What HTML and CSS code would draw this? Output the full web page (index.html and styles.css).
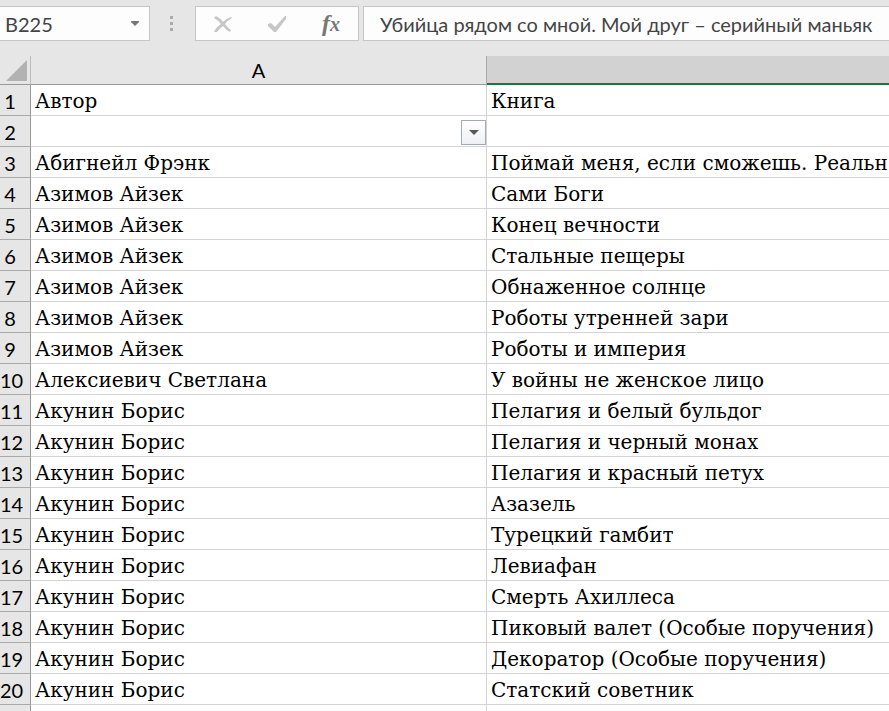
FILE: index.html
```html
<!DOCTYPE html>
<html lang="ru">
<head>
    <meta charset="UTF-8">
    <meta name="viewport" content="width=device-width, initial-scale=1.0">
    <title>Книги</title>
    <link rel="stylesheet" href="styles.css">
</head>
<body>
    <div class="formula-bar">
        <div class="name-box">
            <input type="text" class="name-input" aria-label="Имя ячейки" value="B225">
            <button type="button" class="name-toggle" aria-label="Список имён">
                <svg width="8" height="5" viewBox="0 0 8 5"><path d="M0 0h8v1L4 5 0 1z" fill="#777"/></svg>
            </button>
        </div>
        <div class="grip"><span></span><span></span><span></span></div>
        <div class="actions">
            <button type="button" aria-label="Отмена">
                <svg width="20" height="18" viewBox="0 0 20 18"><path d="M1 3l2-2q4 2 7 6 4-4 8-5l1 1q-4 2-7 6 3 4 6 6l-1 2q-4-2-7-6-4 3-6 6H1q2-5 7-8-3-4-7-6z" fill="#c6c6c6"/></svg>
            </button>
            <button type="button" aria-label="Ввод">
                <svg width="20" height="18" viewBox="0 0 20 18"><path d="M1 9l3-1 4 4L18 1h1v3L9 17H7L1 11z" fill="#c6c6c6"/></svg>
            </button>
            <button type="button" class="fx" aria-label="Вставить функцию"><span class="fx-f">f</span><span class="fx-x">x</span></button>
        </div>
        <input type="text" class="formula-input" aria-label="Строка формул" value="Убийца рядом со мной. Мой друг – серийный маньяк">
    </div>

    <table class="sheet">
        <colgroup>
            <col class="col-num">
            <col class="col-author">
            <col>
        </colgroup>
        <thead>
            <tr>
                <th class="corner"><svg width="21" height="21" viewBox="0 0 21 21"><path d="M21 0v21H0z" fill="#b2b2b2"/></svg></th>
                <th scope="col" class="col-head">A</th>
                <th scope="col" class="selected" aria-label="B"></th>
            </tr>
        </thead>
        <tbody>
            <tr><th scope="row">1</th><td>Автор</td><td>Книга</td></tr>
            <tr>
                <th scope="row">2</th>
                <td class="filter-cell">
                    <button type="button" class="filter" aria-label="Фильтр">
                        <svg width="10" height="5" viewBox="0 0 10 5"><path d="M0 0h10L5 5z" fill="#5a5a5a"/></svg>
                    </button>
                </td>
                <td></td>
            </tr>
            <tr><th scope="row">3</th><td>Абигнейл Фрэнк</td><td>Поймай меня, если сможешь. Реальн</td></tr>
            <tr><th scope="row">4</th><td>Азимов Айзек</td><td>Сами Боги</td></tr>
            <tr><th scope="row">5</th><td>Азимов Айзек</td><td>Конец вечности</td></tr>
            <tr><th scope="row">6</th><td>Азимов Айзек</td><td>Стальные пещеры</td></tr>
            <tr><th scope="row">7</th><td>Азимов Айзек</td><td>Обнаженное солнце</td></tr>
            <tr><th scope="row">8</th><td>Азимов Айзек</td><td>Роботы утренней зари</td></tr>
            <tr><th scope="row">9</th><td>Азимов Айзек</td><td>Роботы и империя</td></tr>
            <tr><th scope="row">10</th><td>Алексиевич Светлана</td><td>У войны не женское лицо</td></tr>
            <tr><th scope="row">11</th><td>Акунин Борис</td><td>Пелагия и белый бульдог</td></tr>
            <tr><th scope="row">12</th><td>Акунин Борис</td><td>Пелагия и черный монах</td></tr>
            <tr><th scope="row">13</th><td>Акунин Борис</td><td>Пелагия и красный петух</td></tr>
            <tr><th scope="row">14</th><td>Акунин Борис</td><td>Азазель</td></tr>
            <tr><th scope="row">15</th><td>Акунин Борис</td><td>Турецкий гамбит</td></tr>
            <tr><th scope="row">16</th><td>Акунин Борис</td><td>Левиафан</td></tr>
            <tr><th scope="row">17</th><td>Акунин Борис</td><td>Смерть Ахиллеса</td></tr>
            <tr><th scope="row">18</th><td>Акунин Борис</td><td>Пиковый валет (Особые поручения)</td></tr>
            <tr><th scope="row">19</th><td>Акунин Борис</td><td>Декоратор (Особые поручения)</td></tr>
            <tr><th scope="row">20</th><td>Акунин Борис</td><td>Статский советник</td></tr>
            <tr><th scope="row"></th><td></td><td></td></tr>
        </tbody>
    </table>
</body>
</html>
```
FILE: styles.css
```css
* {
    margin: 0;
    padding: 0;
    box-sizing: border-box;
}

html, body {
    height: 100%;
    overflow: hidden;
}

body {
    background: #e6e6e6;
    font-family: Lato, "Open Sans", sans-serif;
    font-size: 20px;
    color: #000;
}

button, input {
    font: inherit;
    border: none;
    outline: none;
    background: none;
}

svg {
    display: block;
}

.formula-bar {
    display: flex;
    height: 56px;
    padding: 6px 0 15px;
    color: #444;
}

.name-box {
    display: flex;
    align-items: center;
    width: 150px;
    padding: 0 10px 0 5px;
    background: #fdfdfd;
    border: 1px solid #c6c6c6;
    border-left: none;
}

.name-input {
    flex: 1;
    min-width: 0;
    color: inherit;
}

.grip {
    display: flex;
    flex-direction: column;
    align-items: center;
    justify-content: center;
    gap: 3px;
    width: 45px;
    padding-right: 2px;
}

.grip span {
    width: 3px;
    height: 3px;
    background: #aaa;
}

.actions {
    display: flex;
    width: 164px;
    background: #fdfdfd;
    border: 1px solid #c6c6c6;
}

.actions button {
    display: flex;
    flex: 1;
    align-items: center;
    justify-content: center;
}

.actions .fx {
    align-items: baseline;
    font-family: "Liberation Serif", serif;
    font-style: italic;
    font-weight: bold;
    line-height: 32px;
    color: #777;
}

.fx-f {
    font-size: 24px;
}

.fx-x {
    font-size: 20px;
}

.formula-input {
    flex: 1;
    min-width: 0;
    margin-left: 4px;
    padding-left: 16px;
    color: inherit;
    background: #fdfdfd;
    border: 1px solid #c6c6c6;
    border-right: none;
}

.sheet {
    width: 100%;
    table-layout: fixed;
    border-collapse: separate;
    border-spacing: 0;
    background: #fff;
}

.col-num {
    width: 31px;
}

.col-author {
    width: 456px;
}

.sheet th {
    font-weight: normal;
    background: #e6e6e6;
}

.sheet thead th {
    height: 29px;
    line-height: 28px;
    border-bottom: 1px solid #999;
}

.sheet thead .corner {
    padding: 4px 0 3px 6px;
    border-right: 1px solid #bbb;
}

.sheet thead .col-head {
    border-right: 1px solid #aaa;
}

.sheet thead .selected {
    background: #d2d2d2;
    border-bottom: 2px solid #217346;
}

.sheet tbody th {
    padding: 2px 10px 0 0;
    line-height: 28px;
    text-align: center;
    border-right: 1px solid #999;
    border-bottom: 1px solid #aaa;
    white-space: nowrap;
}

.sheet td {
    height: 31px;
    padding: 2px 4px 0;
    font-family: "DejaVu Serif", serif;
    line-height: 28px;
    white-space: nowrap;
    overflow: hidden;
    border-right: 1px solid #d4d4d4;
    border-bottom: 1px solid #d4d4d4;
}

.sheet td:last-child {
    padding-right: 0;
    border-right: none;
}

.sheet .filter-cell {
    padding-right: 0;
}

.filter {
    display: flex;
    align-items: center;
    justify-content: center;
    width: 25px;
    height: 25px;
    margin-left: auto;
    background: linear-gradient(#fff, #eef0f4);
    border: 1px solid #a3aab5;
}
```
